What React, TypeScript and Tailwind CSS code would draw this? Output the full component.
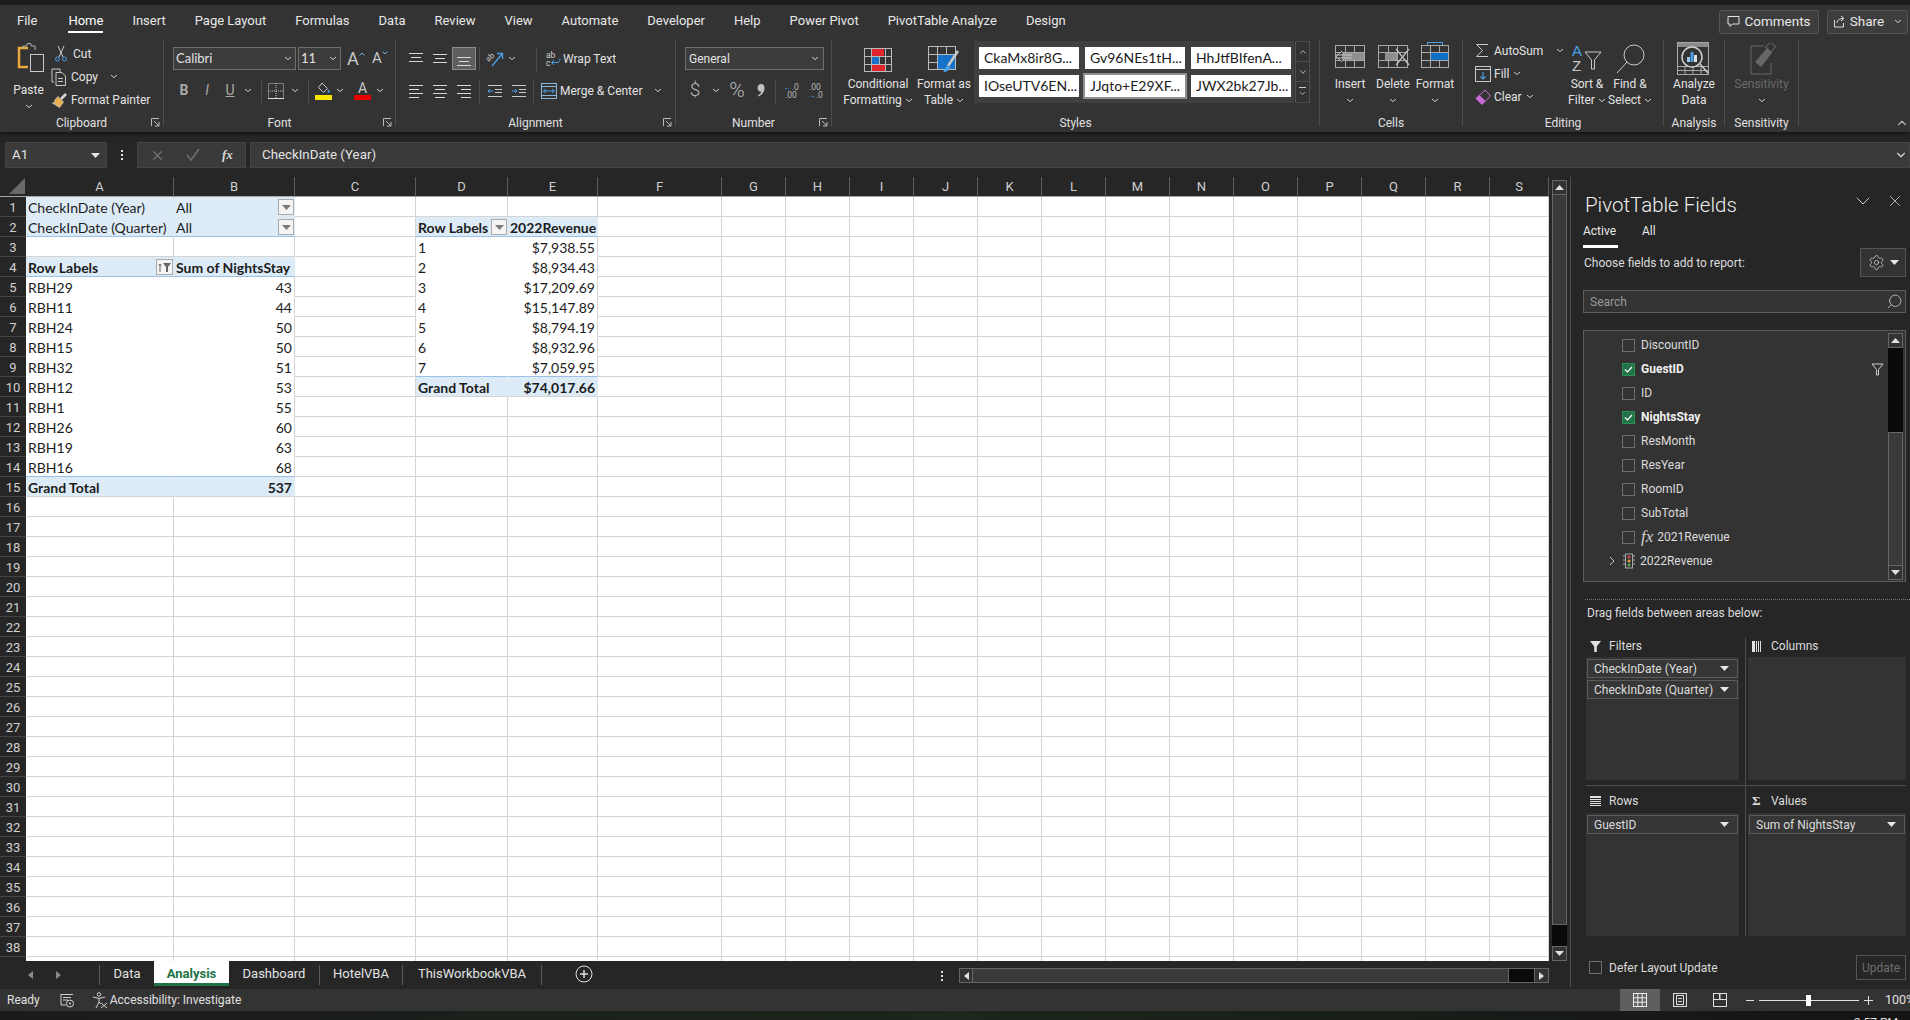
import React from 'react';
import { ChevronDown, ChevronUp, X, Search, Settings } from 'lucide-react';

const Chev = ({ className = '' }: { className?: string }) => (
  <svg width="8" height="5" viewBox="0 0 8 5" className={`shrink-0 ${className}`}>
    <path d="M1 1l3 2.6L7 1" fill="none" stroke="#d0d0d0" strokeWidth="1" />
  </svg>
);

const Tri = ({ color = '#e6e6e6', className = '' }: { color?: string; className?: string }) => (
  <svg width="9" height="5" viewBox="0 0 9 5" className={`shrink-0 ${className}`}>
    <path d="M0 0h9L4.5 5z" fill={color} />
  </svg>
);

const Launcher = () => (
  <svg width="9" height="9" viewBox="0 0 9 9" className="absolute right-[3px] top-[78px]">
    <path d="M.5 8V.5H8M3 3l4.5 4.5M4 8h4V4" fill="none" stroke="#bdbdbd" strokeWidth="1" />
  </svg>
);

const Group = ({ className, label, launcher, children }: { className: string; label: string; launcher?: boolean; children?: React.ReactNode }) => (
  <div className={`relative h-[86px] mt-[2px] border-r border-[#4d4d4d] shrink-0 ${className}`}>
    <div className="h-[72px] flex">{children}</div>
    <div className="text-center leading-[22px] text-[#e0e0e0]">{label}</div>
    {launcher && <Launcher />}
  </div>
);

const BigBtn = ({ icon, lines, className = '', dim }: { icon: React.ReactNode; lines: React.ReactNode[]; className?: string; dim?: boolean }) => (
  <div className={`flex flex-col items-center shrink-0 ${className} ${dim ? 'text-[#6a6a6a]' : ''}`}>
    <div className="h-[36px] flex items-center justify-center">{icon}</div>
    {lines.map((l, i) => (
      <div key={i} className="h-[16px] leading-[16px] whitespace-nowrap flex items-center gap-[3px]">{l}</div>
    ))}
  </div>
);

const VSep = ({ className = '' }: { className?: string }) => <div className={`w-px h-[24px] bg-[#4d4d4d] shrink-0 ${className}`} />;

// three or four horizontal lines, used by the alignment buttons
const Lines = ({ rows, w = 16 }: { rows: [number, number, number][]; w?: number }) => (
  <svg width={w} height="16" viewBox={`0 0 ${w} 16`}>
    {rows.map(([y, a, b], i) => (
      <path key={i} d={`M${a} ${y}.5H${b}`} stroke="#d8d8d8" strokeWidth="1" />
    ))}
  </svg>
);

const AlignBtn = ({ children, active }: { children: React.ReactNode; active?: boolean }) => (
  <div className={`w-[24px] h-[23px] flex items-center justify-center ${active ? 'bg-[#5f5f5f] border border-[#8c8c8c]' : ''}`}>{children}</div>
);

const SheetIcon = ({ kind }: { kind: 'insert' | 'delete' | 'format' }) => (
  <svg width="34" height="32" viewBox="0 0 34 32">
    <g fill="none" stroke="#a8a8a8" strokeWidth="1">
      {kind === 'format' ? <rect x="3.5" y="3.5" width="27" height="22" /> : <rect x="2.5" y="3.5" width="29" height="22" />}
      <path d="M3 10.500h28M3 18.500h28M12.500 4v21M21.500 4v21" />
    </g>
    {kind === 'insert' && (
      <g>
        <rect x="9" y="11" width="22" height="7" fill="#8f8f8f" />
        <path d="M9 9l-6 5.500L9 20M3 13h16M3 16h16" fill="#333" stroke="#c8c8c8" strokeWidth="1" />
      </g>
    )}
    {kind === 'delete' && (
      <g>
        <rect x="9" y="11" width="12" height="7" fill="#8f8f8f" />
        <path d="M20 7l13 16M33 7L20 23" stroke="#bdbdbd" strokeWidth="1.300" />
      </g>
    )}
    {kind === 'format' && (
      <g>
        <rect x="13" y="11" width="17" height="7" fill="#0f6fc6" />
        <path d="M9 .5h16M9.500 0v3M24.500 0v3" stroke="#4aa0e6" strokeWidth="1" />
      </g>
    )}
  </svg>
);

const StyleCell = ({ text, active }: { text: string; active?: boolean }) => (
  <div className={`h-[22px] w-[100px] bg-white text-[#1a1a1a] text-[14px] leading-[22px] pl-[5px] [font-family:Lato,sans-serif] whitespace-nowrap ${active ? 'outline-2 outline-[#8f8f8f]' : ''}`}>{text}</div>
);

const Ribbon = () => (
  <div className="h-[127px] bg-[#333333] shrink-0 relative shadow-[0_2px_4px_rgba(0,0,0,0.5)] z-10">
    {/* tab strip */}
    <div className="h-[33px] flex items-center text-[13px] text-[#e8e8e8] relative">
      <div className="flex items-center gap-[29px] pl-[17px] h-full pb-[1px]">
        <span className="mr-[2px]">File</span>
        <span className="relative text-white">
          Home
          <span className="absolute left-0 right-0 top-[20px] h-[2px] bg-white" />
        </span>
        {['Insert', 'Page Layout', 'Formulas', 'Data', 'Review', 'View', 'Automate', 'Developer', 'Help', 'Power Pivot', 'PivotTable Analyze', 'Design'].map(t => (
          <span key={t}>{t}</span>
        ))}
      </div>
      <div className="ml-auto flex items-center gap-[8px] pr-[2px]">
        <div className="w-[100px] h-[24px] bg-[#3d3d3d] border border-[#555] rounded-[2px] flex items-center justify-center gap-[4px] text-[13.5px]">
          <svg width="13" height="13" viewBox="0 0 13 13"><path d="M1 1.500h11v7.500H5.500L3 11.500V9H1z" fill="none" stroke="#e0e0e0" /></svg>
          Comments
        </div>
        <div className="w-[81px] h-[24px] bg-[#3d3d3d] border border-[#555] rounded-[2px] flex items-center justify-center gap-[4px] text-[13.5px]">
          <svg width="13" height="13" viewBox="0 0 13 13"><path d="M1.500 5v7h9V8M4 8c0-3 3-4.500 6-4.500M8 1l3 2.500L8 6" fill="none" stroke="#e0e0e0" /></svg>
          Share
          <Chev className="ml-[6px]" />
        </div>
      </div>
    </div>

    {/* commands */}
    <div className="flex h-[94px] text-[12px] text-[#e2e2e2]">
      <Group className="w-[164px]" label="Clipboard" launcher>
        <div className="w-[51px] pl-[6px] shrink-0 flex flex-col items-center">
          <svg width="30" height="31" viewBox="0 0 30 31" className="mt-[2px] ml-[5px]">
            <path d="M12 6H3v19h9" fill="none" stroke="#e8a93e" strokeWidth="2.500" />
            <path d="M7 6V4h3.500l1-2.500h3l1 2.500H19v4" fill="none" stroke="#b5b5b5" />
            <rect x="14.500" y="12.500" width="13" height="17" fill="#333" stroke="#c8c8c8" />
          </svg>
          <div className="leading-[16px] mt-[9px] whitespace-nowrap">Paste</div>
          <Chev className="mt-[6px]" />
        </div>
        <div className="flex flex-col pt-[2px]">
          <div className="h-[24px] flex items-center gap-[5px]">
            <svg width="14" height="18" viewBox="0 0 14 18" className="ml-[3px]"><path d="M4 1l5 11M10 1L5 12" stroke="#c9c9c9" fill="none" /><circle cx="3.500" cy="14" r="2" fill="none" stroke="#4aa0e6" /><circle cx="10.500" cy="14" r="2" fill="none" stroke="#4aa0e6" /></svg>
            Cut
          </div>
          <div className="h-[24px] flex items-center gap-[3px]">
            <svg width="17" height="18" viewBox="0 0 17 18"><path d="M3 14H1V1h8v3" fill="none" stroke="#c9c9c9" /><path d="M5 4.500h6l3.500 3.500v9.500H5z" fill="none" stroke="#c9c9c9" /><path d="M7 10.500h5M7 13.500h5" stroke="#c9c9c9" /></svg>
            Copy
            <Chev className="ml-[9px]" />
          </div>
          <div className="h-[24px] flex items-center gap-[3px]">
            <svg width="17" height="17" viewBox="0 0 17 17"><path d="M10 7L15 2" stroke="#d8d8d8" strokeWidth="2.500" /><path d="M7 4.500l5.500 5.500-4 5.500-7-4.500 3-1-1-1.500z" fill="#e8b04a" stroke="#d8d8d8" strokeWidth=".7" /></svg>
            Format Painter
          </div>
        </div>
      </Group>

      <Group className="w-[232px]" label="Font" launcher>
        <div className="flex flex-col pl-[9px] pt-[7px]">
          <div className="flex items-center h-[23px]">
            <div className="w-[123px] h-[23px] border border-[#6e6e6e] bg-[#3c3c3c] flex items-center justify-between pl-[2px] pr-[3px] [font-family:Lato,sans-serif] text-[13px]">Calibri<Chev /></div>
            <div className="w-[43px] h-[23px] border border-[#6e6e6e] bg-[#3c3c3c] ml-[2px] flex items-center justify-between pl-[2px] pr-[3px] [font-family:Lato,sans-serif] text-[13px]">11<Chev /></div>
            <div className="ml-[6px] w-[18px] text-[18px] leading-[23px] text-[#c8c8c8] relative">A<svg width="6" height="4" viewBox="0 0 6 4" className="absolute left-[12px] top-[5px]"><path d="M.5 3.500L3 1l2.500 2.500" fill="none" stroke="#6fb2e8" /></svg></div>
            <div className="ml-[7px] w-[16px] text-[15px] leading-[23px] text-[#c8c8c8] relative">A<svg width="6" height="4" viewBox="0 0 6 4" className="absolute left-[10px] top-[4px]"><path d="M.5.500L3 3 5.500.500" fill="none" stroke="#6fb2e8" /></svg></div>
          </div>
          <div className="flex items-center h-[23px] mt-[9px]">
            <span className="w-[24px] text-center ml-[-1px] font-bold text-[14px] text-[#a8a8a8]">B</span>
            <span className="w-[22px] text-center italic text-[14px] text-[#a8a8a8]">I</span>
            <span className="w-[24px] text-center underline text-[14px] text-[#a8a8a8]">U</span>
            <Chev className="ml-[2px]" />
            <VSep className="ml-[9px]" />
            <svg width="16" height="16" viewBox="0 0 16 16" className="ml-[6px]"><rect x=".5" y=".5" width="15" height="15" fill="none" stroke="#c8c8c8" strokeDasharray="1 1" /><path d="M0 8h16M8 0v16" stroke="#c8c8c8" strokeDasharray="1 1" /><path d="M0 15.500h16" stroke="#e0e0e0" /></svg>
            <Chev className="ml-[7px]" />
            <VSep className="ml-[9px]" />
            <div className="w-[17px] ml-[6px] flex flex-col items-center">
              <svg width="15" height="12" viewBox="0 0 15 12"><path d="M6 1l5.500 5.500-4 4-5-5z" fill="none" stroke="#c8c8c8" /><path d="M12 7c1 1.500 2 2 2 3.500h-2.500z" fill="#4aa0e6" /></svg>
              <div className="w-[17px] h-[5px] bg-[#f7e600] mt-[1px]" />
            </div>
            <Chev className="ml-[4px]" />
            <div className="w-[17px] ml-[10px] flex flex-col items-center">
              <span className="leading-[12px] text-[14px] text-[#c8c8c8]">A</span>
              <div className="w-[17px] h-[5px] bg-[#e60000] mt-[1px]" />
            </div>
            <Chev className="ml-[5px]" />
          </div>
        </div>
      </Group>

      <Group className="w-[280px]" label="Alignment" launcher>
        <div className="flex flex-col pl-[8px] pt-[7px]">
          <div className="flex items-center h-[23px]">
            <AlignBtn><Lines rows={[[2, 1, 15], [6, 3, 13], [10, 1, 15]]} /></AlignBtn>
            <AlignBtn><Lines rows={[[3, 1, 15], [7, 3, 13], [11, 1, 15]]} /></AlignBtn>
            <AlignBtn active><Lines rows={[[6, 1, 15], [10, 3, 13], [14, 1, 15]]} /></AlignBtn>
            <VSep className="ml-[3px]" />
            <svg width="18" height="16" viewBox="0 0 18 16" className="ml-[6px]"><path d="M6 15L16 3M11 2.500h5.500V8" fill="none" stroke="#4aa0e6" strokeWidth="1.300" /><text x="0" y="9" fontSize="8" fill="#c8c8c8" transform="rotate(-45 4 7)">ab</text></svg>
            <Chev className="ml-[4px]" />
            <VSep className="ml-[20px]" />
            <div className="flex items-center ml-[9px] gap-[2px]">
              <svg width="15" height="16" viewBox="0 0 15 16"><text x="0" y="7" fontSize="8.500" fill="#cfcfcf">ab</text><text x="0" y="15" fontSize="8.500" fill="#cfcfcf">c</text><path d="M14 7.500c0 3-1 4-3 4H6M8 9l-2.500 2.500L8 14" fill="none" stroke="#4aa0e6" /></svg>
              Wrap Text
            </div>
          </div>
          <div className="flex items-center h-[23px] mt-[9px]">
            <AlignBtn><Lines rows={[[2, 1, 15], [6, 1, 11], [10, 1, 15], [14, 1, 11]]} /></AlignBtn>
            <AlignBtn><Lines rows={[[2, 1, 15], [6, 3, 13], [10, 1, 15], [14, 3, 13]]} /></AlignBtn>
            <AlignBtn><Lines rows={[[2, 1, 15], [6, 5, 15], [10, 1, 15], [14, 5, 15]]} /></AlignBtn>
            <VSep className="ml-[3px]" />
            <div className="w-[24px] ml-[3px] flex justify-center"><svg width="16" height="14" viewBox="0 0 16 14"><path d="M1 1.500h14M8 5.500h7M8 8.500h7M1 12.500h14" stroke="#c8c8c8" /><path d="M6 7H1M3 5L1 7l2 2" fill="none" stroke="#4aa0e6" /></svg></div>
            <div className="w-[24px] flex justify-center"><svg width="16" height="14" viewBox="0 0 16 14"><path d="M1 1.500h14M8 5.500h7M8 8.500h7M1 12.500h14" stroke="#c8c8c8" /><path d="M1 7h5M4 5l2 2-2 2" fill="none" stroke="#4aa0e6" /></svg></div>
            <VSep className="ml-[2px]" />
            <div className="flex items-center ml-[7px] gap-[3px]">
              <svg width="16" height="16" viewBox="0 0 16 16"><rect x=".5" y=".5" width="15" height="15" fill="none" stroke="#8ab8dd" /><path d="M0 3.500h16M0 12.500h16" stroke="#8ab8dd" /><path d="M2.500 8h11M5 6L2.500 8 5 10M11 6l2.500 2L11 10" fill="none" stroke="#4aa0e6" /></svg>
              Merge & Center
              <Chev className="ml-[9px]" />
            </div>
          </div>
        </div>
      </Group>

      <Group className="w-[156px]" label="Number" launcher>
        <div className="flex flex-col pl-[9px] pt-[7px]">
          <div className="w-[139px] h-[23px] border border-[#6e6e6e] bg-[#3c3c3c] flex items-center justify-between pl-[3px] pr-[4px]">General<Chev /></div>
          <div className="flex items-center h-[23px] mt-[9px] text-[#b8b8b8]">
            <span className="text-[19px] font-light w-[14px] ml-[3px] text-center">$</span>
            <Chev className="ml-[10px]" />
            <span className="text-[21px] font-light ml-[5px] w-[24px] text-center">%</span>
            <svg width="8" height="13" viewBox="0 0 8 13" className="ml-[8px] mr-[2px]"><path d="M4 0c2.500 0 3.500 1.800 3.500 4C7.500 8 5 11 1.500 12.500L1 11.500C3 10.300 4 9 4.200 7.800 2 7.800.5 6 .5 4 .5 1.800 2 0 4 0z" fill="#c0c0c0" /></svg>
            <VSep className="ml-[8px]" />
            <div className="flex items-center ml-[6px] text-[8.5px] leading-[8px] w-[18px] flex-col"><span><span className="text-[#4aa0e6]">←</span>.0</span><span>.00</span></div>
            <div className="flex items-center ml-[6px] text-[8.5px] leading-[8px] w-[18px] flex-col"><span>.00</span><span><span className="text-[#4aa0e6]">→</span>.0</span></div>
          </div>
        </div>
      </Group>

      <Group className="w-[488px]" label="Styles">
        <BigBtn
          className="ml-[15px] w-[62px]"
          lines={['Conditional', <>Formatting <Chev /></>]}
          icon={
            <svg width="28" height="24" viewBox="0 0 28 24" className="mt-[4px]">
              <rect x=".5" y=".5" width="27" height="23" fill="none" stroke="#b9b9b9" />
              <path d="M7.500 0v24M15.500 0v24M21.500 0v24M0 8.500h28M0 16.500h28" stroke="#b9b9b9" />
              <rect x="8" y="1" width="12" height="7" fill="#e0262c" />
              <rect x="8" y="9" width="7" height="7" fill="#1473c9" />
              <rect x="8" y="17" width="13" height="6" fill="#e0262c" />
            </svg>
          }
        />
        <BigBtn
          className="ml-[9px] w-[52px]"
          lines={['Format as', <>Table <Chev /></>]}
          icon={
            <svg width="32" height="28" viewBox="0 0 32 28" className="mt-[4px]">
              <rect x=".5" y=".5" width="27" height="23" fill="none" stroke="#b9b9b9" />
              <path d="M9.500 0v24M18.500 0v24M0 8.500h28M0 16.500h28" stroke="#b9b9b9" />
              <rect x="10" y="9" width="17" height="14" fill="#1473c9" />
              <path d="M30 5L20 20" stroke="#c8c8c8" strokeWidth="2.500" />
              <path d="M20 19c-3 2-3 5-5 7 4 0 7-2 7-5z" fill="#4aa0e6" />
            </svg>
          }
        />
        <div className="ml-[4px] mt-[1px] w-[320px] h-[62px] bg-[#404040] flex flex-col justify-center gap-[6px] pl-[5px]">
          <div className="flex gap-[6px]">
            <StyleCell text="CkaMx8ir8G..." />
            <StyleCell text="Gv96NEs1tH..." />
            <StyleCell text="HhJtfBIfenA..." />
          </div>
          <div className="flex gap-[6px]">
            <StyleCell text="IOseUTV6EN..." />
            <StyleCell text="JJqto+E29XF..." active />
            <StyleCell text="JWX2bk27Jb..." />
          </div>
        </div>
        <div className="ml-[1px] mt-[1px] w-[15px] h-[62px] flex flex-col border border-[#4d4d4d]">
          <div className="h-[20px] flex items-center justify-center border-b border-[#4d4d4d]"><ChevronUp size={10} color="#d0d0d0" /></div>
          <div className="h-[20px] flex items-center justify-center border-b border-[#4d4d4d]"><ChevronDown size={10} color="#d0d0d0" /></div>
          <div className="flex-1 flex flex-col items-center justify-center gap-[1px]"><div className="w-[7px] h-px bg-[#d0d0d0]" /><ChevronDown size={9} color="#d0d0d0" /></div>
        </div>
      </Group>

      <Group className="w-[143px]" label="Cells">
        <BigBtn className="ml-[12px] w-[36px]" icon={<SheetIcon kind="insert" />} lines={['Insert', <Chev />]} />
        <BigBtn className="ml-[7px] w-[36px]" icon={<SheetIcon kind="delete" />} lines={['Delete', <Chev />]} />
        <BigBtn className="ml-[6px] w-[36px]" icon={<SheetIcon kind="format" />} lines={['Format', <Chev />]} />
      </Group>

      <Group className="w-[201px]" label="Editing">
        <div className="flex flex-col pl-[12px] w-[105px]">
          <div className="h-[23px] mt-[-1px] flex items-center gap-[4px]">
            <svg width="14" height="15" viewBox="0 0 14 15"><path d="M13 1.500H1.500L7.500 7.500l-6 6H13" fill="none" stroke="#c8c8c8" /></svg>
            <span className="ml-[1px]">AutoSum</span><Chev className="ml-[9px]" />
          </div>
          <div className="h-[23px] flex items-center gap-[3px]">
            <svg width="16" height="16" viewBox="0 0 16 16"><rect x=".5" y=".5" width="15" height="15" fill="none" stroke="#c8c8c8" /><path d="M0 3.500h16" stroke="#c8c8c8" /><path d="M8 6v7M5.500 10.500L8 13l2.500-2.500" fill="none" stroke="#4aa0e6" strokeWidth="1.200" /></svg>
            Fill<Chev className="ml-[1px]" />
          </div>
          <div className="h-[23px] flex items-center gap-[3px]">
            <svg width="16" height="16" viewBox="0 0 16 16"><path d="M10 1l5.500 6L7 15.500 1 9.500z" fill="none" stroke="#c86dd7" /><path d="M1 9.500L7 15.500 10.500 12 4.500 6z" fill="#c86dd7" /></svg>
            Clear<Chev className="ml-[1px]" />
          </div>
        </div>
        <BigBtn
          className="w-[42px] ml-[-2px]"
          lines={['Sort &', <>Filter <Chev /></>]}
          icon={
            <svg width="32" height="32" viewBox="0 0 32 32" className="mt-[1px]">
              <text x="1" y="13" fontSize="15" fill="#4aa0e6" fontFamily="Liberation Sans">A</text>
              <text x="1" y="28" fontSize="15" fill="#c8c8c8" fontFamily="Liberation Sans">Z</text>
              <path d="M14 9h16l-6.500 8v9h-3v-9z" fill="none" stroke="#c8c8c8" />
            </svg>
          }
        />
        <BigBtn
          className="w-[42px] ml-[1px]"
          lines={['Find &', <>Select <Chev /></>]}
          icon={
            <svg width="32" height="32" viewBox="0 0 32 32" className="mt-[1px]">
              <circle cx="20" cy="12" r="10" fill="none" stroke="#c8c8c8" />
              <path d="M13 19L3 30" stroke="#c8c8c8" />
            </svg>
          }
        />
      </Group>

      <Group className="w-[61px]" label="Analysis">
        <BigBtn
          className="w-full"
          lines={['Analyze', 'Data']}
          icon={
            <svg width="34" height="34" viewBox="0 0 34 34" className="mt-[1px]">
              <rect x=".5" y=".5" width="31" height="32" fill="none" stroke="#a8a8a8" />
              <rect x="1" y="1" width="30" height="4" fill="#8a8a8a" />
              <path d="M0 24.500h32M0 28.500h32M8 24v9M16 24v9M24 24v9" stroke="#a8a8a8" />
              <circle cx="15" cy="15" r="10" fill="#333" stroke="#d0d0d0" strokeWidth="1.500" />
              <rect x="10" y="15" width="3" height="5" fill="#9ac6ee" />
              <rect x="13.500" y="10" width="3" height="10" fill="#4aa0e6" />
              <rect x="17" y="13" width="3" height="7" fill="#e0e0e0" />
              <path d="M23 22l8 9" stroke="#d0d0d0" strokeWidth="1.500" />
            </svg>
          }
        />
      </Group>

      <Group className="w-[74px]" label="Sensitivity">
        <BigBtn
          className="w-full"
          dim
          lines={['Sensitivity', <Chev />]}
          icon={
            <svg width="28" height="34" viewBox="0 0 28 34" className="mt-[3px]">
              <path d="M16 3H3v28h20V20" fill="none" stroke="#666" />
              <path d="M19 5l5 5L13 24l-6-5z" fill="#666" />
              <rect x="19" y="0" width="7" height="7" fill="none" stroke="#666" transform="rotate(40 22 4)" />
            </svg>
          }
        />
      </Group>
      <div className="ml-auto pr-[1px] pt-[78px]"><ChevronUp size={14} color="#b0b0b0" /></div>
    </div>
  </div>
);

const FormulaBar = () => (
  <div className="h-[45px] shrink-0 bg-[#262626] pt-[10px] flex items-start text-[13.3px] text-[#e4e4e4]">
    <div className="ml-[5px] w-[102px] h-[26px] bg-[#3a3a3a] border border-[#444] flex items-center justify-between pl-[6px] pr-[6px]">A1<Tri /></div>
    <div className="w-[30px] h-[26px] flex flex-col items-center justify-center gap-[2px]">
      <span className="w-[2px] h-[2px] bg-[#e0e0e0]" /><span className="w-[2px] h-[2px] bg-[#e0e0e0]" /><span className="w-[2px] h-[2px] bg-[#e0e0e0]" />
    </div>
    <div className="w-[109px] h-[26px] bg-[#3a3a3a] border border-[#444] flex items-center pl-[12px]">
      <X size={15} color="#707070" />
      <svg width="16" height="14" viewBox="0 0 16 14" className="ml-[20px]"><path d="M2 7l4 5L14 1" fill="none" stroke="#707070" strokeWidth="1.500" /></svg>
      <span className="ml-[21px] italic font-bold text-[13px] text-[#d8d8d8] [font-family:'Liberation_Serif',serif]">fx</span>
    </div>
    <div className="ml-[4px] flex-1 h-[26px] bg-[#3a3a3a] border border-[#444] flex items-center justify-between pl-[11px] pr-[1px]">
      CheckInDate (Year)
      <ChevronDown size={14} color="#d8d8d8" />
    </div>
  </div>
);

const COLS = ['A', 'B', 'C', 'D', 'E', 'F', 'G', 'H', 'I', 'J', 'K', 'L', 'M', 'N', 'O', 'P', 'Q', 'R', 'S'];

const PivotLeft = ['RBH29', 'RBH11', 'RBH24', 'RBH15', 'RBH32', 'RBH12', 'RBH1', 'RBH26', 'RBH19', 'RBH16'];
const PivotLeftVals = [43, 44, 50, 50, 51, 53, 55, 60, 63, 68];
const PivotRightVals = ['$7,938.55', '$8,934.43', '$17,209.69', '$15,147.89', '$8,794.19', '$8,932.96', '$7,059.95'];

const DropBtn = ({ filtered }: { filtered?: boolean }) => (
  <div className={`absolute right-0 top-[2px] h-[16px] bg-[#f4f4f4] border border-[#ababab] flex items-center justify-center ${filtered ? 'w-[17px]' : 'w-[16px]'}`}>
    {filtered ? (
      <svg width="13" height="11" viewBox="0 0 13 11"><path d="M5 1h8L10 5v5H8V5z" fill="#666" /><path d="M2 10V2M.5 3.500L2 2l1.500 1.500" fill="none" stroke="#666" /></svg>
    ) : (
      <Tri color="#7a7a7a" />
    )}
  </div>
);

// one spreadsheet cell, r and c count from 1
const Cell = ({ r, c }: { r: number; c: number }) => {
  const base = 'relative h-[20px] px-[2px] pt-px leading-[20px] whitespace-nowrap border-r border-b text-[#1c1c1c]';
  if (c === 1 && r <= 2) {
    return <div className={`${base} bg-[#ddebf7] border-r-[#ddebf7] ${r === 2 ? 'border-b-[#9bc2e6]' : 'border-b-[#ddebf7]'}`}>{r === 1 ? 'CheckInDate (Year)' : 'CheckInDate (Quarter)'}</div>;
  }
  if (c === 2 && r <= 2) {
    return <div className={`${base} bg-[#ddebf7] border-r-[#ddebf7] ${r === 2 ? 'border-b-[#9bc2e6]' : 'border-b-[#ddebf7]'}`}>All<DropBtn /></div>;
  }
  if (c === 1 && r === 4) return <div className={`${base} bg-[#ddebf7] font-bold border-r-[#ddebf7] border-b-[#9bc2e6]`}>Row Labels<DropBtn filtered /></div>;
  if (c === 2 && r === 4) return <div className={`${base} bg-[#ddebf7] font-bold border-r-[#ddebf7] border-b-[#9bc2e6]`}>Sum of NightsStay</div>;
  if (c === 1 && r >= 5 && r <= 14) return <div className={`${base} bg-white border-r-white ${r === 14 ? 'border-b-[#9bc2e6]' : 'border-b-white'}`}>{PivotLeft[r - 5]}</div>;
  if (c === 2 && r >= 5 && r <= 14) return <div className={`${base} bg-white text-right border-r-[#d4d4d4] ${r === 14 ? 'border-b-[#9bc2e6]' : 'border-b-white'}`}>{PivotLeftVals[r - 5]}</div>;
  if (c === 1 && r === 15) return <div className={`${base} bg-[#ddebf7] font-bold border-r-[#ddebf7] border-b-[#d4d4d4]`}>Grand Total</div>;
  if (c === 2 && r === 15) return <div className={`${base} bg-[#ddebf7] font-bold text-right border-r-[#ddebf7] border-b-[#d4d4d4]`}>537</div>;

  if (c === 4 && r === 2) return <div className={`${base} bg-[#ddebf7] font-bold border-r-[#ddebf7] border-b-[#9bc2e6]`}>Row Labels<DropBtn /></div>;
  if (c === 5 && r === 2) return <div className={`${base} bg-[#ddebf7] font-bold border-r-[#ddebf7] border-b-[#9bc2e6]`}>2022Revenue</div>;
  if (c === 4 && r >= 3 && r <= 9) return <div className={`${base} bg-white border-r-white ${r === 9 ? 'border-b-[#9bc2e6]' : 'border-b-white'}`}>{r - 2}</div>;
  if (c === 5 && r >= 3 && r <= 9) return <div className={`${base} bg-white text-right border-r-[#d4d4d4] ${r === 9 ? 'border-b-[#9bc2e6]' : 'border-b-white'}`}>{PivotRightVals[r - 3]}</div>;
  if (c === 4 && r === 10) return <div className={`${base} bg-[#ddebf7] font-bold border-r-[#ddebf7] border-b-[#d4d4d4]`}>Grand Total</div>;
  if (c === 5 && r === 10) return <div className={`${base} bg-[#ddebf7] font-bold text-right border-r-[#ddebf7] border-b-[#d4d4d4]`}>$74,017.66</div>;

  return <div className={`${base} bg-white border-[#d4d4d4]`} />;
};

const Sheet = () => {
  const rows = Array.from({ length: 39 }, (_, i) => i + 1);
  return (
    <div className="w-[1549px] h-[784px] overflow-hidden shrink-0">
      <div className="grid grid-cols-[26px_148px_121px_121px_92px_90px_124px_repeat(12,64px)_59px] auto-rows-[20px] text-[14px] [font-family:Lato,sans-serif]">
        <div className="bg-[#262626] border-b border-[#a8a8a8] flex items-end justify-end pr-[1px] pb-[2px]">
          <svg width="16" height="16" viewBox="0 0 16 16"><path d="M16 0v16H0z" fill="#6a6a6a" /></svg>
        </div>
        {COLS.map(c => (
          <div key={c} className="bg-[#262626] border-b border-b-[#a8a8a8] border-r border-r-[#5c5c5c] text-center text-[#d0d0d0] leading-[19px] text-[13px] [font-family:Roboto,sans-serif]">{c}</div>
        ))}
        {rows.map(r => (
          <React.Fragment key={r}>
            <div className="bg-[#262626] border-b border-[#444] pt-px text-center text-[#d0d0d0] leading-[20px] text-[13px] [font-family:Roboto,sans-serif]">{r < 39 ? r : ''}</div>
            {COLS.map((_, i) => (
              <Cell key={i} r={r} c={i + 1} />
            ))}
          </React.Fragment>
        ))}
      </div>
    </div>
  );
};

const VScroll = () => (
  <div className="ml-[3px] mt-[3px] w-[15px] h-[781px] flex flex-col shrink-0">
    <div className="h-[15px] bg-[#333] border border-[#666] flex items-center justify-center"><svg width="9" height="5" viewBox="0 0 9 5"><path d="M0 5h9L4.500 0z" fill="#e0e0e0" /></svg></div>
    <div className="h-[730px] bg-[#3a3a3a] border-x border-b border-[#666]" />
    <div className="flex-1 bg-[#0a0a0a]" />
    <div className="h-[15px] bg-[#333] border border-[#666] flex items-center justify-center"><Tri color="#e0e0e0" /></div>
  </div>
);

const SheetTabs = () => (
  <div className="h-[28px] shrink-0 flex items-start text-[13px] text-[#e2e2e2] w-[1549px]">
    <div className="w-[100px] h-[20px] flex items-center pl-[28px] gap-[23px] border-r border-[#5c5c5c] mt-[4px]">
      <svg width="5" height="8" viewBox="0 0 5 8"><path d="M5 0v8L0 4z" fill="#8a8a8a" /></svg>
      <svg width="5" height="8" viewBox="0 0 5 8"><path d="M0 0v8l5-4z" fill="#8a8a8a" /></svg>
    </div>
    <div className="w-[54px] h-[28px] leading-[26px] text-center">Data</div>
    <div className="w-[75px] h-[25px] bg-white text-[#217346] font-bold text-center leading-[25px] border-b-[3px] border-[#217346]">Analysis</div>
    <div className="w-[91px] h-[20px] mt-[4px] leading-[18px] text-center border-r border-[#5c5c5c]">Dashboard</div>
    <div className="w-[83px] h-[20px] mt-[4px] leading-[18px] text-center border-r border-[#5c5c5c]">HotelVBA</div>
    <div className="w-[139px] h-[20px] mt-[4px] leading-[18px] text-center border-r border-[#5c5c5c]">ThisWorkbookVBA</div>
    <div className="ml-[33px] mt-[4px]">
      <svg width="18" height="18" viewBox="0 0 18 18"><circle cx="9" cy="9" r="8" fill="none" stroke="#e0e0e0" /><path d="M9 5v8M5 9h8" stroke="#e0e0e0" strokeWidth="1.500" /></svg>
    </div>
    <div className="ml-auto w-[14px] mt-[7px] h-[15px] flex flex-col items-center justify-center gap-[2px]">
      <span className="w-[2px] h-[2px] bg-[#e0e0e0]" /><span className="w-[2px] h-[2px] bg-[#e0e0e0]" /><span className="w-[2px] h-[2px] bg-[#e0e0e0]" />
    </div>
    <div className="ml-[10px] mt-[7px] w-[590px] h-[15px] flex items-stretch border border-[#666] shrink-0">
      <div className="w-[13px] bg-[#333] border-r border-[#666] flex items-center justify-center"><svg width="5" height="8" viewBox="0 0 5 8"><path d="M5 0v8L0 4z" fill="#e0e0e0" /></svg></div>
      <div className="w-[536px] bg-[#3a3a3a] border-r border-[#666]" />
      <div className="flex-1 bg-[#0a0a0a]" />
      <div className="w-[14px] bg-[#333] border-l border-[#666] flex items-center justify-center"><svg width="5" height="8" viewBox="0 0 5 8"><path d="M0 0v8l5-4z" fill="#e0e0e0" /></svg></div>
    </div>
  </div>
);

const Check = ({ on }: { on?: boolean }) => (
  <div className={`w-[13px] h-[13px] shrink-0 border flex items-center justify-center ${on ? 'bg-[#217346] border-[#2f8f5b]' : 'border-[#6e6e6e]'}`}>
    {on && <svg width="9" height="7" viewBox="0 0 9 7"><path d="M1 3.500L3.500 6 8 1" fill="none" stroke="#fff" strokeWidth="1.200" /></svg>}
  </div>
);

const Field = ({ name, on }: { name: string; on?: boolean }) => (
  <div className="h-[24px] flex items-center pl-[38px] gap-[6px]">
    <Check on={on} />
    <span className={on ? 'font-bold text-[#f0f0f0]' : ''}>{name}</span>
    {name === 'GuestID' && <svg width="13" height="13" viewBox="0 0 13 13" className="ml-auto mr-[4px]"><path d="M1 1h11L7.500 6.500V12h-2V6.500z" fill="none" stroke="#d0d0d0" /></svg>}
  </div>
);

const Chip = ({ label }: { label: string }) => (
  <div className="h-[19px] border border-[#5a5a5a] bg-[#363636] flex items-center justify-between pl-[6px] pr-[8px] whitespace-nowrap">
    {label}
    <Tri />
  </div>
);

const AreaHead = ({ icon, label, className = '' }: { icon: React.ReactNode; label: string; className?: string }) => (
  <div className={`flex items-center ${className}`}>
    <div className="w-[23px] flex justify-start pl-[4px]">{icon}</div>
    {label}
  </div>
);

const PivotPane = () => (
  <div className="w-[340px] h-[812px] shrink-0 relative text-[12px] text-[#dcdcdc] pt-[8px]">
    <div className="absolute left-0 top-0 h-[810px] w-px bg-[#4d4d4d]" />
    <div className="h-[40px] pl-[15px] pr-[5px] flex items-center justify-between">
      <span className="text-[20.5px] font-light text-[#efefef]">PivotTable Fields</span>
      <div className="flex items-center gap-[11px] mb-[8px] mr-[1px]">
        <ChevronDown size={24} strokeWidth={0.9} color="#e0e0e0" />
        <X size={18} strokeWidth={1} color="#e0e0e0" />
      </div>
    </div>
    <div className="h-[23px] ml-[13px] flex gap-[24px] items-start">
      <span className="w-[35px] h-[23px] border-b-[3px] border-white leading-[13px] text-[#e8e8e8]">Active</span>
      <span className="leading-[13px] text-[#e8e8e8]">All</span>
    </div>
    <div className="h-[29px] ml-[14px] mr-[4px] flex items-center justify-between">
      <span>Choose fields to add to report:</span>
      <div className="w-[46px] h-[29px] bg-[#333] border border-[#555] flex items-center justify-center gap-[5px]">
        <Settings size={17} strokeWidth={1} color="#d8d8d8" />
        <Tri />
      </div>
    </div>
    <div className="mt-[13px] ml-[13px] w-[323px] h-[23px] bg-[#333] border border-[#5a5a5a] flex items-center justify-between pl-[6px] pr-[2px] text-[#9a9a9a]">
      Search
      <Search size={17} strokeWidth={1} color="#e0e0e0" className="-scale-x-100" />
    </div>
    <div className="mt-[17px] ml-[13px] w-[323px] h-[252px] bg-[#333] border border-[#5a5a5a] flex pt-[2px]">
      <div className="flex-1">
        <Field name="DiscountID" />
        <Field name="GuestID" on />
        <Field name="ID" />
        <Field name="NightsStay" on />
        <Field name="ResMonth" />
        <Field name="ResYear" />
        <Field name="RoomID" />
        <Field name="SubTotal" />
        <div className="h-[24px] flex items-center pl-[38px] gap-[6px]">
          <Check />
          <span className="italic text-[17px] leading-[20px] [font-family:'Liberation_Serif',serif] text-[#d0d0d0]">fx</span>
          <span className="-ml-[2px]">2021Revenue</span>
        </div>
        <div className="h-[24px] flex items-center pl-[25px]">
          <svg width="7" height="10" viewBox="0 0 7 10"><path d="M1 1l4 4-4 4" fill="none" stroke="#c8c8c8" /></svg>
          <svg width="14" height="16" viewBox="0 0 14 16" className="ml-[6px]">
            <rect x="3.500" y="1" width="7" height="14" fill="none" stroke="#a8a8a8" />
            <path d="M1 3h2M1 7h2M1 11h2M11 3h2M11 7h2M11 11h2" stroke="#a8a8a8" />
            <circle cx="7" cy="4" r="1.500" fill="#d14b4b" /><circle cx="7" cy="8" r="1.500" fill="#d8a23c" /><circle cx="7" cy="12" r="1.500" fill="#5aa85a" />
          </svg>
          <span className="ml-[4px]">2022Revenue</span>
        </div>
      </div>
      <div className="w-[15px] mr-[2px] flex flex-col h-[247px] shrink-0">
        <div className="h-[15px] bg-[#333] border border-[#666] flex items-center justify-center"><svg width="9" height="5" viewBox="0 0 9 5"><path d="M0 5h9L4.500 0z" fill="#e0e0e0" /></svg></div>
        <div className="h-[84px] bg-[#0a0a0a]" />
        <div className="flex-1 bg-[#3a3a3a] border-x border-t border-[#666]" />
        <div className="h-[15px] bg-[#333] border border-[#666] flex items-center justify-center"><Tri color="#e0e0e0" /></div>
      </div>
    </div>
    <div className="mt-[17px] ml-[15px] border-t border-dotted border-[#7a7a7a]" />
    <div className="h-[26px] ml-[17px] leading-[26px]">Drag fields between areas below:</div>

    <div className="mt-[11px] ml-[16px] w-[320px]">
      <div className="h-[149px] flex border-b border-[#4d4d4d]">
        <div className="w-[160px] border-r border-[#4d4d4d]">
          <AreaHead className="h-[18px]" label="Filters" icon={<svg width="11" height="11" viewBox="0 0 11 11"><path d="M0 0h11L6.800 5.500V11H4.200V5.500z" fill="#e0e0e0" /></svg>} />
          <div className="mt-[2px] w-[153px] h-[123px] bg-[#333] pt-[2px] pl-px pr-px flex flex-col gap-[2px]">
            <Chip label="CheckInDate (Year)" />
            <Chip label="CheckInDate (Quarter)" />
          </div>
        </div>
        <div className="flex-1 pl-[2px]">
          <AreaHead className="h-[18px]" label="Columns" icon={<svg width="11" height="11" viewBox="0 0 11 11"><path d="M0 0h3v11H0zM4 0h1v11H4zM6 0h1v11H6zM8 0h1v11H8z" fill="#e0e0e0" /></svg>} />
          <div className="mt-[2px] h-[123px] bg-[#333] w-[158px]" />
        </div>
      </div>
      <div className="h-[150px] flex">
        <div className="w-[160px] border-r border-[#4d4d4d] pt-[4px]">
          <AreaHead className="h-[21px]" label="Rows" icon={<svg width="11" height="10" viewBox="0 0 11 10"><path d="M0 0h11v2H0zM0 3h11v1H0zM0 5h11v1H0zM0 7h11v1H0zM0 9h11v1H0z" fill="#e0e0e0" /></svg>} />
          <div className="mt-[2px] w-[153px] h-[123px] bg-[#333] pt-[2px] px-px">
            <Chip label="GuestID" />
          </div>
        </div>
        <div className="flex-1 pl-[2px] pt-[4px]">
          <AreaHead className="h-[21px]" label="Values" icon={<span className="text-[13px] font-bold leading-[13px] [font-family:'Liberation_Serif',serif]">Σ</span>} />
          <div className="mt-[2px] h-[123px] bg-[#333] w-[158px] pt-[2px] px-px">
            <Chip label="Sum of NightsStay" />
          </div>
        </div>
      </div>
    </div>
    <div className="mt-[19px] ml-[19px] mr-[4px] h-[25px] flex items-center">
      <Check />
      <span className="ml-[7px]">Defer Layout Update</span>
      <div className="ml-auto w-[50px] h-[25px] border border-[#555] text-[#6e6e6e] flex items-center justify-center">Update</div>
    </div>
  </div>
);

const StatusBar = () => (
  <div className="h-[22px] shrink-0 bg-[#333333] flex items-center text-[12px] text-[#e0e0e0]">
    <span className="ml-[7px]">Ready</span>
    <svg width="15" height="15" viewBox="0 0 15 15" className="ml-[20px]"><path d="M1 1.500h12M1 1v11h5M3 4.500h8M3 7h5" fill="none" stroke="#d0d0d0" /><circle cx="10" cy="10.500" r="3.500" fill="none" stroke="#d0d0d0" /><circle cx="10" cy="10.500" r="1" fill="#d0d0d0" /></svg>
    <svg width="16" height="17" viewBox="0 0 16 17" className="ml-[17px]"><circle cx="7" cy="2.500" r="1.800" fill="none" stroke="#d0d0d0" /><path d="M1 5l6 1.500L13 5M7 6.500V10l-3 6M7 10l2 2" fill="none" stroke="#d0d0d0" /><path d="M9 11l6 5M15 11l-6 5" stroke="#d0d0d0" /></svg>
    <span className="ml-[2px]">Accessibility: Investigate</span>
    <div className="ml-auto flex items-center h-full">
      <div className="w-[40px] h-full bg-[#5f5f5f] flex items-center justify-center">
        <svg width="14" height="14" viewBox="0 0 14 14"><rect x=".5" y=".5" width="13" height="13" fill="none" stroke="#f0f0f0" /><path d="M0 4.800h14M0 9.200h14M4.800 0v14M9.200 0v14" stroke="#f0f0f0" /></svg>
      </div>
      <div className="w-[40px] flex justify-center">
        <svg width="14" height="14" viewBox="0 0 14 14"><rect x=".5" y=".5" width="13" height="13" fill="none" stroke="#e0e0e0" /><rect x="3.500" y="2.500" width="7" height="9" fill="none" stroke="#e0e0e0" /><path d="M5 5.500h4M5 8.500h4" stroke="#e0e0e0" /></svg>
      </div>
      <div className="w-[40px] flex justify-center">
        <svg width="14" height="14" viewBox="0 0 14 14"><rect x=".5" y=".5" width="13" height="13" fill="none" stroke="#e0e0e0" /><path d="M0 6.500h6.500V0M7 0v6.500h7" fill="none" stroke="#e0e0e0" /></svg>
      </div>
      <span className="w-[8px] h-px bg-[#e0e0e0] ml-[6px]" />
      <div className="ml-[5px] w-[100px] h-px bg-[#e0e0e0] relative">
        <span className="absolute left-[47px] -top-[5px] w-[5px] h-[11px] bg-white" />
      </div>
      <svg width="9" height="9" viewBox="0 0 9 9" className="ml-[5px]"><path d="M4.500 0v9M0 4.500h9" stroke="#e0e0e0" /></svg>
      <span className="ml-[12px] w-[25px] overflow-hidden whitespace-nowrap text-[12.5px]">100%</span>
    </div>
  </div>
);

export default function App() {
  return (
    <div className="w-[1910px] h-[1020px] overflow-hidden flex flex-col bg-[#262626] text-[12px] [font-family:Roboto,sans-serif]">
      <div className="h-[5px] shrink-0 bg-[#1e1e1e]" />
      <Ribbon />
      <FormulaBar />
      <div className="h-[812px] shrink-0 flex">
        <div className="w-[1570px] shrink-0 flex flex-col">
          <div className="flex h-[784px]">
            <Sheet />
            <VScroll />
          </div>
          <SheetTabs />
        </div>
        <PivotPane />
      </div>
      <StatusBar />
      <div className="flex-1 overflow-hidden bg-gradient-to-r from-[#1a1a1a] via-[#1c261c] to-[#141414] flex justify-end">
        <span className="text-[12px] text-[#e0e0e0] leading-[12px] mt-[6px] mr-[12px]">2:57 PM</span>
      </div>
    </div>
  );
}
